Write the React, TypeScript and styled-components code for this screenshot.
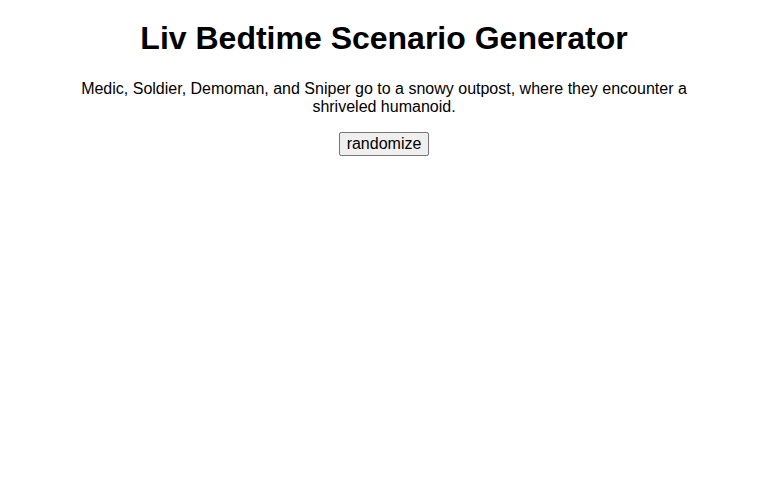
import * as React from "react";
import styled, { createGlobalStyle } from "styled-components";

const GlobalStyle = createGlobalStyle`
  body {
    margin: 0;
    background: #ffffff;
    font-family: "Liberation Sans", Arial, sans-serif;
    color: #000000;
  }
`;

const Page = styled.div`
  display: flex;
  flex-direction: column;
  align-items: center;
  text-align: center;
`;

const Title = styled.h1`
  font-size: 32px;
  font-weight: bold;
  margin: 20px 0 23px;
`;

const Scenario = styled.p`
  width: 80%;
  font-size: 16px;
  margin: 0 0 16px;
`;

const RandomButton = styled.button`
  font-family: "Liberation Sans", Arial, sans-serif;
  font-size: 16px;
  padding: 2px 7px;
  color: #000;
  background: #efefef;
  border: 1px solid #767676;
  border-radius: 2px;
`;

const characters = ["Medic", "Soldier", "Demoman", "Sniper"];

export default function App() {
  const [text] = React.useState(
    `${characters.slice(0, 3).join(", ")}, and ${characters[3]} go to a snowy outpost, where they encounter a shriveled humanoid.`
  );
  return (
    <>
      <GlobalStyle />
      <Page>
        <Title>Liv Bedtime Scenario Generator</Title>
        <Scenario>{text}</Scenario>
        <RandomButton>randomize</RandomButton>
      </Page>
    </>
  );
}
